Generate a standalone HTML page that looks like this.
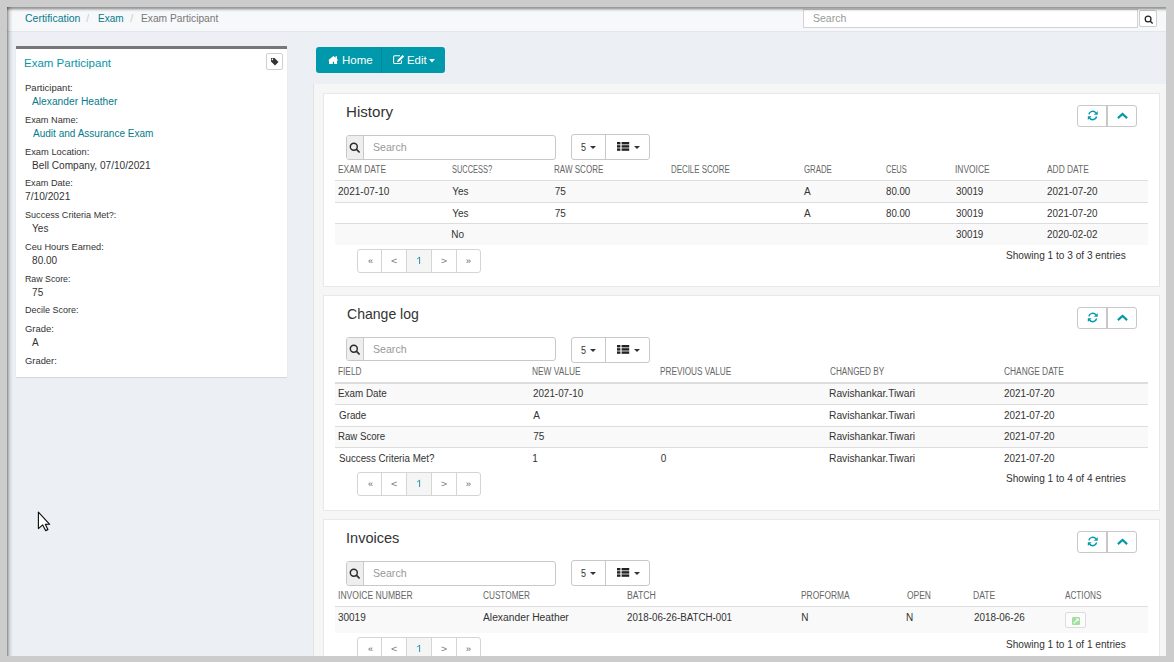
<!DOCTYPE html>
<html><head><meta charset="utf-8">
<style>
*{box-sizing:border-box;margin:0;padding:0}
html,body{width:1174px;height:662px;overflow:hidden;background:#cccccc;font-family:"Liberation Sans",sans-serif;color:#333;position:relative}
.r{position:absolute}
.t{position:absolute;white-space:nowrap;line-height:1}
</style></head><body>
<div class="r" style="left:7px;top:7px;width:1159px;height:649px;background:#ecf0f5"></div>
<div class="r" style="left:7px;top:7px;width:1159px;height:24px;background:#f7f8fa"></div>
<div class="r" style="left:7px;top:31px;width:1159px;height:1px;background:#e2e5e9"></div>
<span class="t " style="left:24.70px;top:14px;font-size:10.2px;color:#067b8b;transform:scaleX(1.0302);transform-origin:0 0;">Certification</span>
<span class="t " style="left:86.30px;top:14px;font-size:10.2px;color:#c8c8c8;">/</span>
<span class="t " style="left:97.82px;top:14px;font-size:10.2px;color:#067b8b;transform:scaleX(0.9800);transform-origin:0 0;">Exam</span>
<span class="t " style="left:130.30px;top:14px;font-size:10.2px;color:#c8c8c8;">/</span>
<span class="t " style="left:141.40px;top:14px;font-size:10.2px;color:#777;transform:scaleX(1.0039);transform-origin:0 0;">Exam Participant</span>
<div class="r" style="left:803px;top:9px;width:335px;height:19px;background:#fff;border:1px solid #d3d3d3"></div>
<span class="t " style="left:812.70px;top:14px;font-size:10.3px;color:#999;transform:scaleX(1.0219);transform-origin:0 0;">Search</span>
<div class="r" style="left:1139px;top:10px;width:18px;height:17px;background:#fff;border:1px solid #cdcdcd;border-radius:2px"></div>
<svg class="r" style="left:1143.5px;top:14.5px" width="10" height="10" viewBox="0 0 10 10"><circle cx="4.1" cy="3.9" r="2.9" fill="none" stroke="#222" stroke-width="1.25"/><line x1="6.1" y1="6" x2="8.6" y2="8.5" stroke="#222" stroke-width="1.4"/></svg>
<div class="r" style="left:16px;top:46px;width:271px;height:331px;background:#fff;box-shadow:0 1px 1px rgba(0,0,0,.1)"></div>
<div class="r" style="left:16px;top:46px;width:271px;height:3px;background:#777"></div>
<span class="t " style="left:23.99px;top:58px;font-size:11.4px;color:#0895a7;transform:scaleX(1.0106);transform-origin:0 0;">Exam Participant</span>
<div class="r" style="left:266px;top:53px;width:17px;height:17px;background:#fff;border:1px solid #cfcfcf;border-radius:2px"></div>
<svg class="r" style="left:269px;top:56px" width="11" height="11" viewBox="0 0 11 11"><path d="M2 2 L5.5 2 L9.5 6 L6 9.5 L2 5.5 Z" fill="#333"/><circle cx="3.4" cy="3.4" r="0.8" fill="#fff"/></svg>
<span class="t " style="left:25.00px;top:84px;font-size:9.15px;color:#333333;transform:scaleX(1.0444);transform-origin:0 0;">Participant:</span>
<span class="t " style="left:32.30px;top:97px;font-size:10.0px;color:#067b8b;transform:scaleX(1.0229);transform-origin:0 0;">Alexander Heather</span>
<span class="t " style="left:25.00px;top:116px;font-size:9.15px;color:#333333;transform:scaleX(1.0077);transform-origin:0 0;">Exam Name:</span>
<span class="t " style="left:32.80px;top:129px;font-size:10.0px;color:#067b8b;transform:scaleX(1.0033);transform-origin:0 0;">Audit and Assurance Exam</span>
<span class="t " style="left:25.00px;top:148px;font-size:9.15px;color:#333333;transform:scaleX(1.0210);transform-origin:0 0;">Exam Location:</span>
<span class="t " style="left:31.79px;top:161px;font-size:10.0px;color:#333333;transform:scaleX(1.0121);transform-origin:0 0;">Bell Company, 07/10/2021</span>
<span class="t " style="left:25.00px;top:179px;font-size:9.15px;color:#333333;transform:scaleX(1.0021);transform-origin:0 0;">Exam Date:</span>
<span class="t " style="left:25.00px;top:192px;font-size:10.0px;color:#333333;transform:scaleX(1.0182);transform-origin:0 0;">7/10/2021</span>
<span class="t " style="left:25.00px;top:211px;font-size:9.15px;color:#333333;transform:scaleX(0.9956);transform-origin:0 0;">Success Criteria Met?:</span>
<span class="t " style="left:32.10px;top:224px;font-size:10.0px;color:#333333;">Yes</span>
<span class="t " style="left:25.00px;top:243px;font-size:9.15px;color:#333333;transform:scaleX(1.0077);transform-origin:0 0;">Ceu Hours Earned:</span>
<span class="t " style="left:32.10px;top:256px;font-size:10.0px;color:#333333;">80.00</span>
<span class="t " style="left:25.00px;top:275px;font-size:9.15px;color:#333333;transform:scaleX(0.9638);transform-origin:0 0;">Raw Score:</span>
<span class="t " style="left:32.10px;top:288px;font-size:10.0px;color:#333333;">75</span>
<span class="t " style="left:25.00px;top:306px;font-size:9.15px;color:#333333;transform:scaleX(0.9870);transform-origin:0 0;">Decile Score:</span>
<span class="t " style="left:25.00px;top:325px;font-size:9.15px;color:#333333;transform:scaleX(1.0333);transform-origin:0 0;">Grade:</span>
<span class="t " style="left:32.10px;top:338px;font-size:10.0px;color:#333333;">A</span>
<span class="t " style="left:25.00px;top:357px;font-size:9.15px;color:#333333;transform:scaleX(1.0290);transform-origin:0 0;">Grader:</span>
<div class="r" style="left:316px;top:47px;width:129px;height:26px;background:#0098ab;border-radius:3px"></div>
<div class="r" style="left:381px;top:47px;width:1px;height:26px;background:#00879a"></div>
<span class="t " style="left:341.55px;top:55px;font-size:11px;color:#fff;transform:scaleX(1.0464);transform-origin:0 0;">Home</span>
<span class="t " style="left:406.86px;top:55px;font-size:10.9px;color:#fff;transform:scaleX(1.0444);transform-origin:0 0;">Edit</span>
<svg class="r" style="left:327px;top:55px" width="12" height="10" viewBox="0 0 12 10"><path d="M1.2 5.3 L6.4 1 L8.5 2.8 V1.2 H10 V4.1 L11.5 5.3 H10.1 V8.9 H7.1 V6.8 H5.8 V8.9 H2 V5.3 Z" fill="#fff"/></svg>
<svg class="r" style="left:392px;top:54px" width="14" height="11" viewBox="0 0 14 11"><path d="M8 1.8 H2.7 Q1.6 1.8 1.6 2.9 V8.5 Q1.6 9.5 2.7 9.5 H8.4 Q9.5 9.5 9.5 8.5 V6.6" fill="none" stroke="#fff" stroke-width="1.05"/><path d="M10.6 1 L12.2 2.6 L7.2 7.6 L5.1 8.2 L5.6 6 Z" fill="#fff"/></svg>
<svg class="r" style="left:429px;top:58.5px" width="6" height="4" viewBox="0 0 6 4"><path d="M0 0 H6 L3 3.5 Z" fill="#fff"/></svg>
<div class="r" style="left:313px;top:84px;width:853px;height:572px;background:#f6f6f6;border-left:1px solid #e2e2e2"></div>
<div class="r" style="left:323px;top:93px;width:837px;height:194px;background:#fff;border:1px solid #e8e8e8"></div>
<span class="t " style="left:345.78px;top:105px;font-size:14.8px;color:#333333;transform:scaleX(1.0222);transform-origin:0 0;">History</span>
<div class="r" style="left:1077px;top:105px;width:60px;height:22px;background:#fff;border:1px solid #c8c8c8;border-radius:3px"></div>
<div class="r" style="left:1106px;top:105px;width:2px;height:22px;background:#c8c8c8"></div>
<svg class="r" style="left:1086.5px;top:109.6px" width="12" height="11" viewBox="0 0 12 11"><path d="M1.9 4.4 A3.9 3.9 0 0 1 8.9 2.9" fill="none" stroke="#0098ab" stroke-width="1.45"/><path d="M10.7 0.9 L10.7 4.7 L6.9 4.7 Z" fill="#0098ab"/><path d="M9.6 6.5 A3.9 3.9 0 0 1 2.6 8.0" fill="none" stroke="#0098ab" stroke-width="1.45"/><path d="M0.8 10.1 L0.8 6.3 L4.6 6.3 Z" fill="#0098ab"/></svg>
<svg class="r" style="left:1117px;top:112px" width="11" height="7" viewBox="0 0 11 7"><path d="M0.9 6.1 L5.5 1.9 L10.1 6.1" fill="none" stroke="#0098ab" stroke-width="2.1"/></svg>
<div class="r" style="left:346px;top:135px;width:210px;height:24.5px;background:#fff;border:1px solid #c8c8c8;border-radius:3px"></div>
<div class="r" style="left:347px;top:136px;width:17px;height:22.5px;background:#eeeeee;border-right:1px solid #c8c8c8;border-radius:2px 0 0 2px"></div>
<svg class="r" style="left:349px;top:141.5px" width="12" height="12" viewBox="0 0 12 12"><circle cx="4.8" cy="4.7" r="3.5" fill="none" stroke="#2a2a2a" stroke-width="1.45"/><line x1="7.3" y1="7.2" x2="10.6" y2="10.5" stroke="#2a2a2a" stroke-width="1.7"/></svg>
<span class="t " style="left:373.00px;top:143px;font-size:10.35px;color:#999;transform:scaleX(1.0250);transform-origin:0 0;">Search</span>
<div class="r" style="left:571px;top:134px;width:79px;height:25.5px;background:#fff;border:1px solid #c8c8c8;border-radius:3px"></div>
<div class="r" style="left:605px;top:134px;width:1px;height:25.5px;background:#c8c8c8"></div>
<span class="t " style="left:581.30px;top:143px;font-size:10.0px;color:#333333;transform:scaleX(0.9000);transform-origin:0 0;">5</span>
<svg class="r" style="left:590px;top:146px" width="6" height="3" viewBox="0 0 6 3"><path d="M0 0 H6 L3 3 Z" fill="#333"/></svg>
<svg class="r" style="left:634px;top:146px" width="6" height="3" viewBox="0 0 6 3"><path d="M0 0 H6 L3 3 Z" fill="#333"/></svg>
<svg class="r" style="left:617px;top:142px" width="13" height="9" viewBox="0 0 13 9"><rect x="0" y="0" width="3.4" height="2.4" fill="#222"/><rect x="0" y="3.2" width="3.4" height="2.4" fill="#222"/><rect x="0" y="6.4" width="3.4" height="2.4" fill="#222"/><rect x="4.6" y="0" width="7.6" height="2.4" fill="#222"/><rect x="4.6" y="3.2" width="7.6" height="2.4" fill="#222"/><rect x="4.6" y="6.4" width="7.6" height="2.4" fill="#222"/></svg>
<span class="t " style="left:337.56px;top:165px;font-size:10.0px;color:#666666;transform:scaleX(0.8429);transform-origin:0 0;">EXAM DATE</span>
<span class="t " style="left:452.30px;top:165px;font-size:10.0px;color:#666666;transform:scaleX(0.7444);transform-origin:0 0;">SUCCESS?</span>
<span class="t " style="left:554.00px;top:165px;font-size:10.0px;color:#666666;transform:scaleX(0.8050);transform-origin:0 0;">RAW SCORE</span>
<span class="t " style="left:670.71px;top:165px;font-size:10.0px;color:#666666;transform:scaleX(0.7877);transform-origin:0 0;">DECILE SCORE</span>
<span class="t " style="left:803.90px;top:165px;font-size:10.0px;color:#666666;transform:scaleX(0.7806);transform-origin:0 0;">GRADE</span>
<span class="t " style="left:886.20px;top:165px;font-size:10.0px;color:#666666;transform:scaleX(0.7464);transform-origin:0 0;">CEUS</span>
<span class="t " style="left:955.16px;top:165px;font-size:10.0px;color:#666666;transform:scaleX(0.8425);transform-origin:0 0;">INVOICE</span>
<span class="t " style="left:1046.80px;top:165px;font-size:10.0px;color:#666666;transform:scaleX(0.8380);transform-origin:0 0;">ADD DATE</span>
<div class="r" style="left:335px;top:180px;width:813px;height:1px;background:#dddddd"></div>
<div class="r" style="left:335px;top:181px;width:813px;height:21px;background:#f9f9f9"></div>
<div class="r" style="left:335px;top:202px;width:813px;height:1px;background:#dddddd"></div>
<div class="r" style="left:335px;top:224px;width:813px;height:21px;background:#f9f9f9"></div>
<div class="r" style="left:335px;top:223px;width:813px;height:1px;background:#dddddd"></div>
<span class="t " style="left:338.40px;top:187px;font-size:10.0px;color:#333333;transform:scaleX(1.0039);transform-origin:0 0;">2021-07-10</span>
<span class="t " style="left:452.30px;top:187px;font-size:10.0px;color:#333333;transform:scaleX(1.0000);transform-origin:0 0;">Yes</span>
<span class="t " style="left:554.80px;top:187px;font-size:10.0px;color:#333333;transform:scaleX(1.0000);transform-origin:0 0;">75</span>
<span class="t " style="left:803.90px;top:187px;font-size:10.0px;color:#333333;transform:scaleX(1.0000);transform-origin:0 0;">A</span>
<span class="t " style="left:886.20px;top:187px;font-size:10.0px;color:#333333;transform:scaleX(0.9680);transform-origin:0 0;">80.00</span>
<span class="t " style="left:956.00px;top:187px;font-size:10.0px;color:#333333;transform:scaleX(0.9821);transform-origin:0 0;">30019</span>
<span class="t " style="left:1046.80px;top:187px;font-size:10.0px;color:#333333;transform:scaleX(0.9863);transform-origin:0 0;">2021-07-20</span>
<span class="t " style="left:452.30px;top:209px;font-size:10.0px;color:#333333;transform:scaleX(1.0000);transform-origin:0 0;">Yes</span>
<span class="t " style="left:554.80px;top:209px;font-size:10.0px;color:#333333;transform:scaleX(1.0000);transform-origin:0 0;">75</span>
<span class="t " style="left:803.90px;top:209px;font-size:10.0px;color:#333333;transform:scaleX(1.0000);transform-origin:0 0;">A</span>
<span class="t " style="left:886.20px;top:209px;font-size:10.0px;color:#333333;transform:scaleX(0.9680);transform-origin:0 0;">80.00</span>
<span class="t " style="left:956.00px;top:209px;font-size:10.0px;color:#333333;transform:scaleX(0.9821);transform-origin:0 0;">30019</span>
<span class="t " style="left:1046.80px;top:209px;font-size:10.0px;color:#333333;transform:scaleX(0.9863);transform-origin:0 0;">2021-07-20</span>
<span class="t " style="left:451.30px;top:230px;font-size:10.0px;color:#333333;transform:scaleX(1.0000);transform-origin:0 0;">No</span>
<span class="t " style="left:956.00px;top:230px;font-size:10.0px;color:#333333;transform:scaleX(0.9821);transform-origin:0 0;">30019</span>
<span class="t " style="left:1046.80px;top:230px;font-size:10.0px;color:#333333;transform:scaleX(0.9863);transform-origin:0 0;">2020-02-02</span>
<div class="r" style="left:357px;top:249px;width:124px;height:24px;background:#fff;border:1px solid #d5d5d5;border-radius:3px"></div>
<div class="r" style="left:406px;top:250px;width:26px;height:22px;background:#f5f5f5"></div>
<div class="r" style="left:381px;top:249px;width:1px;height:24px;background:#d5d5d5"></div>
<div class="r" style="left:406px;top:249px;width:1px;height:24px;background:#d5d5d5"></div>
<div class="r" style="left:431px;top:249px;width:1px;height:24px;background:#d5d5d5"></div>
<div class="r" style="left:456px;top:249px;width:1px;height:24px;background:#d5d5d5"></div>
<span class="t " style="left:367.50px;top:256px;font-size:9.5px;color:#666;transform:scaleX(0.9600);transform-origin:0 0;">&laquo;</span>
<span class="t " style="left:391.30px;top:256px;font-size:9.5px;color:#777;transform:scaleX(1.1400);transform-origin:0 0;">&lt;</span>
<svg class="r" style="left:414px;top:254px" width="10" height="12" viewBox="0 0 10 12"><rect x="5" y="3" width="1.1" height="7" fill="#3a9bb0"/><path d="M3.1 4.9 L5.6 3.2" stroke="#3a9bb0" stroke-width="1" fill="none"/></svg>
<span class="t " style="left:441.00px;top:256px;font-size:9.5px;color:#777;transform:scaleX(1.1000);transform-origin:0 0;">&gt;</span>
<span class="t " style="left:465.80px;top:256px;font-size:9.5px;color:#666;transform:scaleX(1.0000);transform-origin:0 0;">&raquo;</span>
<span class="t " style="left:1005.60px;top:251px;font-size:10.15px;color:#333333;transform:scaleX(0.9983);transform-origin:0 0;">Showing 1 to 3 of 3 entries</span>
<div class="r" style="left:323px;top:295px;width:837px;height:216px;background:#fff;border:1px solid #e8e8e8"></div>
<span class="t " style="left:346.80px;top:307px;font-size:14.8px;color:#333333;transform:scaleX(0.9493);transform-origin:0 0;">Change log</span>
<div class="r" style="left:1077px;top:307px;width:60px;height:22px;background:#fff;border:1px solid #c8c8c8;border-radius:3px"></div>
<div class="r" style="left:1106px;top:307px;width:2px;height:22px;background:#c8c8c8"></div>
<svg class="r" style="left:1086.5px;top:311.6px" width="12" height="11" viewBox="0 0 12 11"><path d="M1.9 4.4 A3.9 3.9 0 0 1 8.9 2.9" fill="none" stroke="#0098ab" stroke-width="1.45"/><path d="M10.7 0.9 L10.7 4.7 L6.9 4.7 Z" fill="#0098ab"/><path d="M9.6 6.5 A3.9 3.9 0 0 1 2.6 8.0" fill="none" stroke="#0098ab" stroke-width="1.45"/><path d="M0.8 10.1 L0.8 6.3 L4.6 6.3 Z" fill="#0098ab"/></svg>
<svg class="r" style="left:1117px;top:314px" width="11" height="7" viewBox="0 0 11 7"><path d="M0.9 6.1 L5.5 1.9 L10.1 6.1" fill="none" stroke="#0098ab" stroke-width="2.1"/></svg>
<div class="r" style="left:346px;top:337px;width:210px;height:24.30000000000001px;background:#fff;border:1px solid #c8c8c8;border-radius:3px"></div>
<div class="r" style="left:347px;top:338px;width:17px;height:22.30000000000001px;background:#eeeeee;border-right:1px solid #c8c8c8;border-radius:2px 0 0 2px"></div>
<svg class="r" style="left:349px;top:343.5px" width="12" height="12" viewBox="0 0 12 12"><circle cx="4.8" cy="4.7" r="3.5" fill="none" stroke="#2a2a2a" stroke-width="1.45"/><line x1="7.3" y1="7.2" x2="10.6" y2="10.5" stroke="#2a2a2a" stroke-width="1.7"/></svg>
<span class="t " style="left:373.00px;top:345px;font-size:10.35px;color:#999;transform:scaleX(1.0250);transform-origin:0 0;">Search</span>
<div class="r" style="left:571px;top:337px;width:79px;height:25.600000000000023px;background:#fff;border:1px solid #c8c8c8;border-radius:3px"></div>
<div class="r" style="left:605px;top:337px;width:1px;height:25.600000000000023px;background:#c8c8c8"></div>
<span class="t " style="left:581.30px;top:346px;font-size:10.0px;color:#333333;transform:scaleX(0.9000);transform-origin:0 0;">5</span>
<svg class="r" style="left:590px;top:349px" width="6" height="3" viewBox="0 0 6 3"><path d="M0 0 H6 L3 3 Z" fill="#333"/></svg>
<svg class="r" style="left:634px;top:349px" width="6" height="3" viewBox="0 0 6 3"><path d="M0 0 H6 L3 3 Z" fill="#333"/></svg>
<svg class="r" style="left:617px;top:345px" width="13" height="9" viewBox="0 0 13 9"><rect x="0" y="0" width="3.4" height="2.4" fill="#222"/><rect x="0" y="3.2" width="3.4" height="2.4" fill="#222"/><rect x="0" y="6.4" width="3.4" height="2.4" fill="#222"/><rect x="4.6" y="0" width="7.6" height="2.4" fill="#222"/><rect x="4.6" y="3.2" width="7.6" height="2.4" fill="#222"/><rect x="4.6" y="6.4" width="7.6" height="2.4" fill="#222"/></svg>
<span class="t " style="left:338.07px;top:367px;font-size:10.0px;color:#666666;transform:scaleX(0.8296);transform-origin:0 0;">FIELD</span>
<span class="t " style="left:532.46px;top:367px;font-size:10.0px;color:#666666;transform:scaleX(0.8368);transform-origin:0 0;">NEW VALUE</span>
<span class="t " style="left:659.98px;top:367px;font-size:10.0px;color:#666666;transform:scaleX(0.8235);transform-origin:0 0;">PREVIOUS VALUE</span>
<span class="t " style="left:829.60px;top:367px;font-size:10.0px;color:#666666;transform:scaleX(0.8182);transform-origin:0 0;">CHANGED BY</span>
<span class="t " style="left:1003.60px;top:367px;font-size:10.0px;color:#666666;transform:scaleX(0.8366);transform-origin:0 0;">CHANGE DATE</span>
<div class="r" style="left:335px;top:382px;width:813px;height:2px;background:#dddddd"></div>
<div class="r" style="left:335px;top:384px;width:813px;height:20px;background:#f9f9f9"></div>
<div class="r" style="left:335px;top:404px;width:813px;height:1px;background:#dddddd"></div>
<div class="r" style="left:335px;top:427px;width:813px;height:20px;background:#f9f9f9"></div>
<div class="r" style="left:335px;top:426px;width:813px;height:1px;background:#dddddd"></div>
<div class="r" style="left:335px;top:447px;width:813px;height:1px;background:#dddddd"></div>
<span class="t " style="left:337.91px;top:389px;font-size:10.0px;color:#333333;transform:scaleX(0.9857);transform-origin:0 0;">Exam Date</span>
<span class="t " style="left:533.30px;top:389px;font-size:10.0px;color:#333333;transform:scaleX(0.9824);transform-origin:0 0;">2021-07-10</span>
<span class="t " style="left:828.58px;top:389px;font-size:10.0px;color:#333333;transform:scaleX(1.0241);transform-origin:0 0;">Ravishankar.Tiwari</span>
<span class="t " style="left:1003.60px;top:389px;font-size:10.0px;color:#333333;transform:scaleX(0.9863);transform-origin:0 0;">2021-07-20</span>
<span class="t " style="left:338.90px;top:411px;font-size:10.0px;color:#333333;transform:scaleX(0.9821);transform-origin:0 0;">Grade</span>
<span class="t " style="left:533.30px;top:411px;font-size:10.0px;color:#333333;transform:scaleX(1.0000);transform-origin:0 0;">A</span>
<span class="t " style="left:828.58px;top:411px;font-size:10.0px;color:#333333;transform:scaleX(1.0241);transform-origin:0 0;">Ravishankar.Tiwari</span>
<span class="t " style="left:1003.60px;top:411px;font-size:10.0px;color:#333333;transform:scaleX(0.9863);transform-origin:0 0;">2021-07-20</span>
<span class="t " style="left:337.94px;top:432px;font-size:10.0px;color:#333333;transform:scaleX(0.9646);transform-origin:0 0;">Raw Score</span>
<span class="t " style="left:533.30px;top:432px;font-size:10.0px;color:#333333;transform:scaleX(1.0000);transform-origin:0 0;">75</span>
<span class="t " style="left:828.58px;top:432px;font-size:10.0px;color:#333333;transform:scaleX(1.0241);transform-origin:0 0;">Ravishankar.Tiwari</span>
<span class="t " style="left:1003.60px;top:432px;font-size:10.0px;color:#333333;transform:scaleX(0.9863);transform-origin:0 0;">2021-07-20</span>
<span class="t " style="left:338.90px;top:454px;font-size:10.0px;color:#333333;transform:scaleX(0.9745);transform-origin:0 0;">Success Criteria Met?</span>
<span class="t " style="left:532.30px;top:454px;font-size:10.0px;color:#333333;transform:scaleX(1.0000);transform-origin:0 0;">1</span>
<span class="t " style="left:660.80px;top:454px;font-size:10.0px;color:#333333;transform:scaleX(1.0000);transform-origin:0 0;">0</span>
<span class="t " style="left:828.58px;top:454px;font-size:10.0px;color:#333333;transform:scaleX(1.0241);transform-origin:0 0;">Ravishankar.Tiwari</span>
<span class="t " style="left:1003.60px;top:454px;font-size:10.0px;color:#333333;transform:scaleX(0.9863);transform-origin:0 0;">2021-07-20</span>
<div class="r" style="left:357px;top:472px;width:124px;height:24px;background:#fff;border:1px solid #d5d5d5;border-radius:3px"></div>
<div class="r" style="left:406px;top:473px;width:26px;height:22px;background:#f5f5f5"></div>
<div class="r" style="left:381px;top:472px;width:1px;height:24px;background:#d5d5d5"></div>
<div class="r" style="left:406px;top:472px;width:1px;height:24px;background:#d5d5d5"></div>
<div class="r" style="left:431px;top:472px;width:1px;height:24px;background:#d5d5d5"></div>
<div class="r" style="left:456px;top:472px;width:1px;height:24px;background:#d5d5d5"></div>
<span class="t " style="left:367.50px;top:479px;font-size:9.5px;color:#666;transform:scaleX(0.9600);transform-origin:0 0;">&laquo;</span>
<span class="t " style="left:391.30px;top:479px;font-size:9.5px;color:#777;transform:scaleX(1.1400);transform-origin:0 0;">&lt;</span>
<svg class="r" style="left:414px;top:477px" width="10" height="12" viewBox="0 0 10 12"><rect x="5" y="3" width="1.1" height="7" fill="#3a9bb0"/><path d="M3.1 4.9 L5.6 3.2" stroke="#3a9bb0" stroke-width="1" fill="none"/></svg>
<span class="t " style="left:441.00px;top:479px;font-size:9.5px;color:#777;transform:scaleX(1.1000);transform-origin:0 0;">&gt;</span>
<span class="t " style="left:465.80px;top:479px;font-size:9.5px;color:#666;transform:scaleX(1.0000);transform-origin:0 0;">&raquo;</span>
<span class="t " style="left:1005.60px;top:474px;font-size:10.15px;color:#333333;transform:scaleX(0.9983);transform-origin:0 0;">Showing 1 to 4 of 4 entries</span>
<div class="r" style="left:323px;top:519px;width:837px;height:182px;background:#fff;border:1px solid #e8e8e8"></div>
<span class="t " style="left:345.82px;top:531px;font-size:14.8px;color:#333333;transform:scaleX(0.9830);transform-origin:0 0;">Invoices</span>
<div class="r" style="left:1077px;top:531px;width:60px;height:22px;background:#fff;border:1px solid #c8c8c8;border-radius:3px"></div>
<div class="r" style="left:1106px;top:531px;width:2px;height:22px;background:#c8c8c8"></div>
<svg class="r" style="left:1086.5px;top:535.6px" width="12" height="11" viewBox="0 0 12 11"><path d="M1.9 4.4 A3.9 3.9 0 0 1 8.9 2.9" fill="none" stroke="#0098ab" stroke-width="1.45"/><path d="M10.7 0.9 L10.7 4.7 L6.9 4.7 Z" fill="#0098ab"/><path d="M9.6 6.5 A3.9 3.9 0 0 1 2.6 8.0" fill="none" stroke="#0098ab" stroke-width="1.45"/><path d="M0.8 10.1 L0.8 6.3 L4.6 6.3 Z" fill="#0098ab"/></svg>
<svg class="r" style="left:1117px;top:538px" width="11" height="7" viewBox="0 0 11 7"><path d="M0.9 6.1 L5.5 1.9 L10.1 6.1" fill="none" stroke="#0098ab" stroke-width="2.1"/></svg>
<div class="r" style="left:346px;top:561px;width:210px;height:25px;background:#fff;border:1px solid #c8c8c8;border-radius:3px"></div>
<div class="r" style="left:347px;top:562px;width:17px;height:23px;background:#eeeeee;border-right:1px solid #c8c8c8;border-radius:2px 0 0 2px"></div>
<svg class="r" style="left:349px;top:567.5px" width="12" height="12" viewBox="0 0 12 12"><circle cx="4.8" cy="4.7" r="3.5" fill="none" stroke="#2a2a2a" stroke-width="1.45"/><line x1="7.3" y1="7.2" x2="10.6" y2="10.5" stroke="#2a2a2a" stroke-width="1.7"/></svg>
<span class="t " style="left:373.00px;top:569px;font-size:10.35px;color:#999;transform:scaleX(1.0250);transform-origin:0 0;">Search</span>
<div class="r" style="left:571px;top:560px;width:79px;height:26px;background:#fff;border:1px solid #c8c8c8;border-radius:3px"></div>
<div class="r" style="left:605px;top:560px;width:1px;height:26px;background:#c8c8c8"></div>
<span class="t " style="left:581.30px;top:569px;font-size:10.0px;color:#333333;transform:scaleX(0.9000);transform-origin:0 0;">5</span>
<svg class="r" style="left:590px;top:572px" width="6" height="3" viewBox="0 0 6 3"><path d="M0 0 H6 L3 3 Z" fill="#333"/></svg>
<svg class="r" style="left:634px;top:572px" width="6" height="3" viewBox="0 0 6 3"><path d="M0 0 H6 L3 3 Z" fill="#333"/></svg>
<svg class="r" style="left:617px;top:568px" width="13" height="9" viewBox="0 0 13 9"><rect x="0" y="0" width="3.4" height="2.4" fill="#222"/><rect x="0" y="3.2" width="3.4" height="2.4" fill="#222"/><rect x="0" y="6.4" width="3.4" height="2.4" fill="#222"/><rect x="4.6" y="0" width="7.6" height="2.4" fill="#222"/><rect x="4.6" y="3.2" width="7.6" height="2.4" fill="#222"/><rect x="4.6" y="6.4" width="7.6" height="2.4" fill="#222"/></svg>
<span class="t " style="left:337.54px;top:591px;font-size:10.0px;color:#666666;transform:scaleX(0.8558);transform-origin:0 0;">INVOICE NUMBER</span>
<span class="t " style="left:482.70px;top:591px;font-size:10.0px;color:#666666;transform:scaleX(0.8228);transform-origin:0 0;">CUSTOMER</span>
<span class="t " style="left:626.53px;top:591px;font-size:10.0px;color:#666666;transform:scaleX(0.8719);transform-origin:0 0;">BATCH</span>
<span class="t " style="left:801.46px;top:591px;font-size:10.0px;color:#666666;transform:scaleX(0.8421);transform-origin:0 0;">PROFORMA</span>
<span class="t " style="left:907.00px;top:591px;font-size:10.0px;color:#666666;transform:scaleX(0.8464);transform-origin:0 0;">OPEN</span>
<span class="t " style="left:973.14px;top:591px;font-size:10.0px;color:#666666;transform:scaleX(0.8600);transform-origin:0 0;">DATE</span>
<span class="t " style="left:1065.00px;top:591px;font-size:10.0px;color:#666666;transform:scaleX(0.8182);transform-origin:0 0;">ACTIONS</span>
<div class="r" style="left:335px;top:606px;width:813px;height:1px;background:#dddddd"></div>
<div class="r" style="left:335px;top:607px;width:813px;height:26px;background:#f9f9f9"></div>
<span class="t " style="left:338.40px;top:613px;font-size:10.0px;color:#333333;transform:scaleX(0.9964);transform-origin:0 0;">30019</span>
<span class="t " style="left:482.70px;top:613px;font-size:10.0px;color:#333333;transform:scaleX(1.0289);transform-origin:0 0;">Alexander Heather</span>
<span class="t " style="left:627.40px;top:613px;font-size:10.0px;color:#333333;transform:scaleX(0.9757);transform-origin:0 0;">2018-06-26-BATCH-001</span>
<span class="t " style="left:801.30px;top:613px;font-size:10.0px;color:#333333;transform:scaleX(1.0000);transform-origin:0 0;">N</span>
<span class="t " style="left:906.00px;top:613px;font-size:10.0px;color:#333333;transform:scaleX(1.0000);transform-origin:0 0;">N</span>
<span class="t " style="left:974.00px;top:613px;font-size:10.0px;color:#333333;transform:scaleX(0.9902);transform-origin:0 0;">2018-06-26</span>
<div class="r" style="left:357px;top:637px;width:124px;height:24px;background:#fff;border:1px solid #d5d5d5;border-radius:3px"></div>
<div class="r" style="left:406px;top:638px;width:26px;height:22px;background:#f5f5f5"></div>
<div class="r" style="left:381px;top:637px;width:1px;height:24px;background:#d5d5d5"></div>
<div class="r" style="left:406px;top:637px;width:1px;height:24px;background:#d5d5d5"></div>
<div class="r" style="left:431px;top:637px;width:1px;height:24px;background:#d5d5d5"></div>
<div class="r" style="left:456px;top:637px;width:1px;height:24px;background:#d5d5d5"></div>
<span class="t " style="left:367.50px;top:644px;font-size:9.5px;color:#666;transform:scaleX(0.9600);transform-origin:0 0;">&laquo;</span>
<span class="t " style="left:391.30px;top:644px;font-size:9.5px;color:#777;transform:scaleX(1.1400);transform-origin:0 0;">&lt;</span>
<svg class="r" style="left:414px;top:642px" width="10" height="12" viewBox="0 0 10 12"><rect x="5" y="3" width="1.1" height="7" fill="#3a9bb0"/><path d="M3.1 4.9 L5.6 3.2" stroke="#3a9bb0" stroke-width="1" fill="none"/></svg>
<span class="t " style="left:441.00px;top:644px;font-size:9.5px;color:#777;transform:scaleX(1.1000);transform-origin:0 0;">&gt;</span>
<span class="t " style="left:465.80px;top:644px;font-size:9.5px;color:#666;transform:scaleX(1.0000);transform-origin:0 0;">&raquo;</span>
<span class="t " style="left:1005.60px;top:640px;font-size:10.15px;color:#333333;transform:scaleX(0.9983);transform-origin:0 0;">Showing 1 to 1 of 1 entries</span>
<div class="r" style="left:1065px;top:612px;width:21px;height:16px;background:#fcfcfc;border:1px solid #dcdcdc;border-radius:2px"></div>
<svg class="r" style="left:1072px;top:617px" width="8" height="8" viewBox="0 0 8 8"><rect x="0" y="0" width="8" height="8" rx="1.2" fill="#a0e0a0"/><path d="M1.8 6.4 L5.4 2.8" stroke="#fff" stroke-width="1.1" fill="none"/><path d="M3.6 1.6 H6.6 V4.6 Z" fill="#fff"/></svg>
<svg class="r" style="left:36px;top:510px;z-index:200" width="16" height="23" viewBox="0 0 16 23"><path d="M2.4 2.2 L2.4 18.6 L6.7 14.9 L9.6 20.6 L11.9 19.6 L9.4 14.4 L13.7 14.3 Z" fill="#fff" stroke="#111" stroke-width="1.15" stroke-linejoin="round"/></svg>
<div class="r" style="left:0px;top:656px;width:1174px;height:6px;background:#cccccc"></div>
<div class="r" style="left:1166px;top:0px;width:8px;height:662px;background:#cccccc"></div>
<div class="r" style="left:7px;top:7px;width:1159px;height:6px;background:linear-gradient(to bottom, rgba(0,0,0,.38) 0.5px, rgba(0,0,0,.32) 1.5px, rgba(0,0,0,.185) 2.5px, rgba(0,0,0,.073) 3.5px, rgba(0,0,0,.02) 4.5px, rgba(0,0,0,0) 5.5px);z-index:100"></div>
<div class="r" style="left:7px;top:7px;width:7px;height:649px;background:linear-gradient(to right, rgba(0,0,0,.37) 0.5px, rgba(0,0,0,.23) 1.5px, rgba(0,0,0,.142) 2.5px, rgba(0,0,0,.079) 3.5px, rgba(0,0,0,.038) 4.5px, rgba(0,0,0,.013) 5.5px, rgba(0,0,0,0) 6.5px);z-index:100"></div>
</body></html>
